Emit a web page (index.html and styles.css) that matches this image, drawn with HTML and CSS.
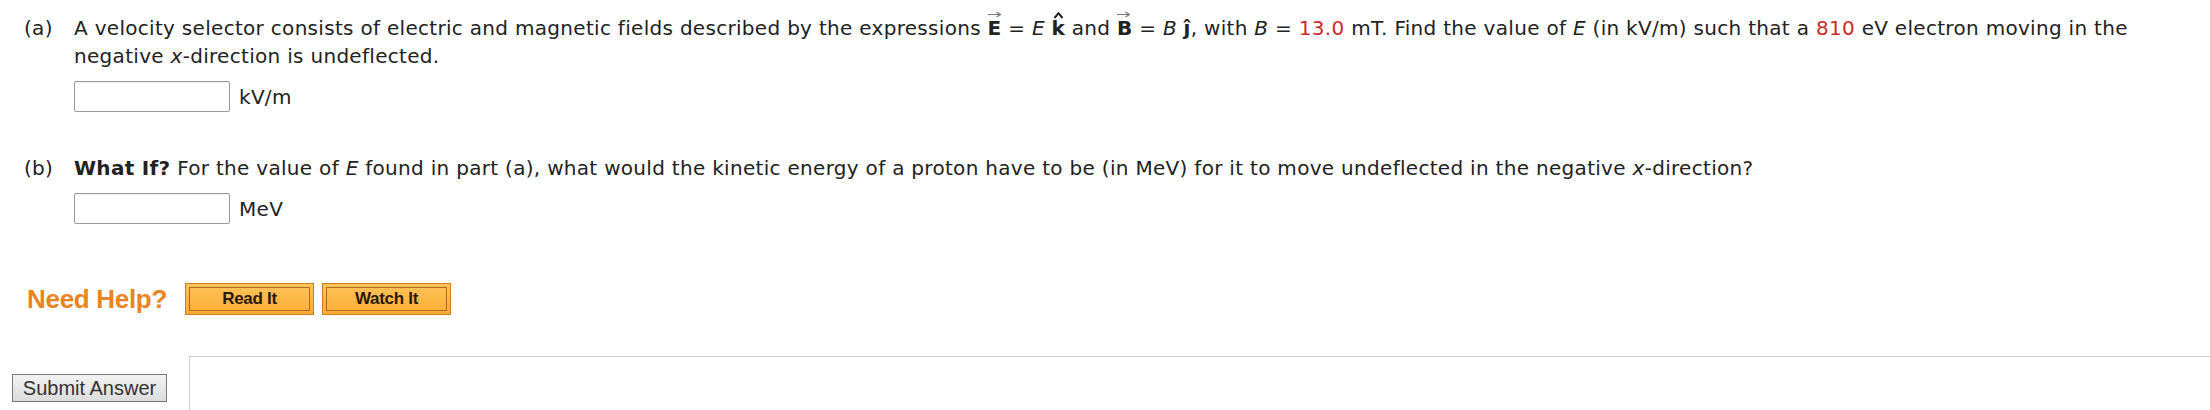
FILE: index.html
```html
<!DOCTYPE html>
<html lang="en">
<head>
  <meta charset="UTF-8" />
  <title>Velocity Selector</title>
  <link rel="stylesheet" href="styles.css">
</head>
<body>
  <div class="question">
    <div class="part part-a">
      <span class="label">(a)</span>
      <div class="part-body">
        <p class="text">A velocity selector consists of electric and magnetic fields described by the expressions
          <span class="vec">E<svg class="arrow" viewBox="0 0 14 7"><path d="M0 3.5H12M8.5 1L12.5 3.5L8.5 6" /></svg></span> = <i>E</i>&nbsp;<span class="hat">k<svg class="caret" viewBox="0 0 10 7"><path d="M1 6L5 1.2L9 6" /></svg></span> and
          <span class="vec">B<svg class="arrow" viewBox="0 0 14 7"><path d="M0 3.5H12M8.5 1L12.5 3.5L8.5 6" /></svg></span> = <i>B</i>&nbsp;<b>ĵ</b>, with <i>B</i> = <span class="red">13.0</span> mT. Find the value of <i>E</i> (in kV/m) such that a <span class="red">810</span> eV electron moving in the negative <i>x</i>-direction is undeflected.</p>
        <div class="answer">
          <input type="text" class="answer-box" />
          <span class="unit">kV/m</span>
        </div>
      </div>
    </div>
    <div class="part part-b">
      <span class="label">(b)</span>
      <div class="part-body">
        <p class="text"><b>What If?</b> For the value of <i>E</i> found in part (a), what would the kinetic energy of a proton have to be (in MeV) for it to move undeflected in the negative <i>x</i>-direction?</p>
        <div class="answer">
          <input type="text" class="answer-box" />
          <span class="unit">MeV</span>
        </div>
      </div>
    </div>
  </div>

  <div class="help">
    <span class="help-title">Need Help?</span>
    <button class="help-btn"><span>Read It</span></button>
    <button class="help-btn"><span>Watch It</span></button>
  </div>

  <div class="submit-row">
    <button class="submit">Submit Answer</button>
    <div class="feedback"></div>
  </div>
</body>
</html>
```

FILE: styles.css
```css
body {
  margin: 0;
  background: #fff;
  color: #222;
  font-family: "DejaVu Sans", Verdana, sans-serif;
  overflow: hidden;
}
.question {
  padding: 14px 24px 0 24px;
}
.part {
  display: flex;
}
.part-b {
  margin-top: 42px;
}
.label {
  width: 50px;
  flex-shrink: 0;
  font-size: 20px;
  line-height: 28px;
  letter-spacing: 0.3px;
}
.part-body {
  flex: 1;
}
.text {
  margin: 0;
  font-size: 20px;
  line-height: 28px;
  letter-spacing: 0.3px;
}
.red {
  color: #cc2a2a;
}
.vec {
  position: relative;
  font-weight: bold;
}
.vec .arrow {
  position: absolute;
  left: 0;
  top: -5px;
  width: 14px;
  height: 7px;
  fill: none;
  stroke: #777;
  stroke-width: 1.1;
}
.hat {
  position: relative;
  font-weight: bold;
}
.hat .caret {
  position: absolute;
  left: 1px;
  top: -4px;
  width: 11px;
  height: 7px;
  fill: none;
  stroke: #222;
  stroke-width: 2;
}
.answer {
  display: flex;
  align-items: center;
  gap: 9px;
  margin-top: 11px;
}
.answer-box {
  width: 156px;
  height: 31px;
  box-sizing: border-box;
  margin: 0;
  border: 1px solid #999;
  border-radius: 2px;
  box-shadow: inset 0 1px 1px rgba(0,0,0,0.08);
}
.unit {
  font-size: 20px;
  letter-spacing: 0.3px;
}
.help {
  display: flex;
  align-items: center;
  padding-left: 27px;
  margin-top: 59px;
}
.help-title {
  font-family: "Liberation Sans", Arial, sans-serif;
  font-weight: bold;
  font-size: 26px;
  letter-spacing: -0.3px;
  color: #ea8420;
  margin-right: 18px;
}
.help-btn {
  width: 129px;
  height: 32px;
  padding: 3px;
  margin: 0 8px 0 0;
  border: 1px solid #d07a22;
  background: linear-gradient(#ffc45a, #fbac33);
  cursor: pointer;
}
.help-btn span {
  display: flex;
  align-items: center;
  justify-content: center;
  height: 100%;
  box-sizing: border-box;
  border: 1px solid #b26a1e;
  font-family: "Liberation Sans", Arial, sans-serif;
  font-weight: bold;
  font-size: 17px;
  letter-spacing: -0.3px;
  color: #2a1a08;
}
.submit-row {
  display: flex;
  margin-top: 41px;
  padding-left: 12px;
}
.submit {
  margin-top: 18px;
  width: 155px;
  height: 28px;
  padding: 0;
  border: 1px solid #777;
  background: linear-gradient(#f2f2f2, #dcdcdc);
  font-family: "Liberation Sans", Arial, sans-serif;
  font-size: 20px;
  color: #333;
}
.feedback {
  flex: 1;
  margin-left: 22px;
  height: 90px;
  border: 1px solid #ccc;
  border-right: none;
}
```
